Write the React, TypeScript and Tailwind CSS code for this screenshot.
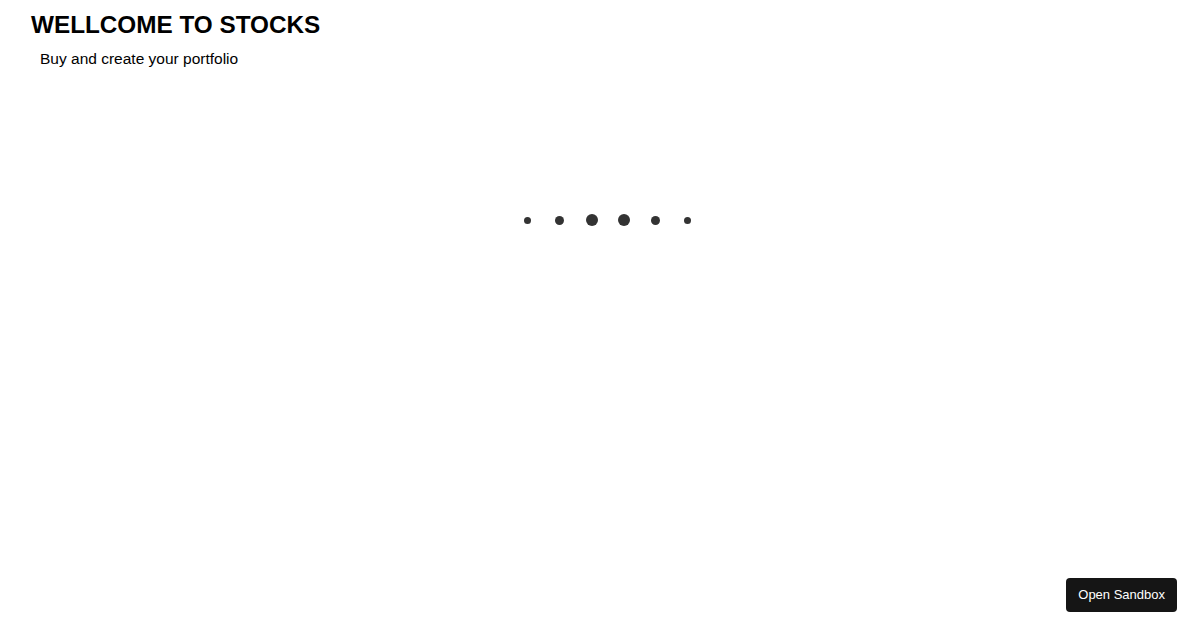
import React from "react"

const dots = [
  { size: "w-[7px] h-[7px]" },
  { size: "w-[9px] h-[9px]" },
  { size: "w-[12px] h-[12px]" },
  { size: "w-[12px] h-[12px]" },
  { size: "w-[9px] h-[9px]" },
  { size: "w-[7px] h-[7px]" },
]

export default function App() {
  return (
    <div className="min-h-screen bg-white text-black font-['Liberation_Sans',Arial,sans-serif]">
      <header className="pt-[9px] pl-[31px]">
        <h1 className="text-[24.3px] font-bold leading-8">WELLCOME TO STOCKS</h1>
        <p className="mt-[6px] pl-[9px] text-[15.5px] leading-6">Buy and create your portfolio</p>
      </header>

      {/* loader */}
      <div className="mt-[143px] flex justify-center pl-[15px]">
        <div className="flex items-center h-[12px]">
          {dots.map((d, i) => (
            <div key={i} className="w-[32px] flex justify-center">
              <span className={`${d.size} rounded-full bg-[#333333] block`} />
            </div>
          ))}
        </div>
      </div>

      <button className="fixed right-[23px] bottom-[18px] h-[34px] px-[12px] rounded-[4px] bg-[#151515] text-white text-[13px]">
        Open Sandbox
      </button>
    </div>
  )
}
